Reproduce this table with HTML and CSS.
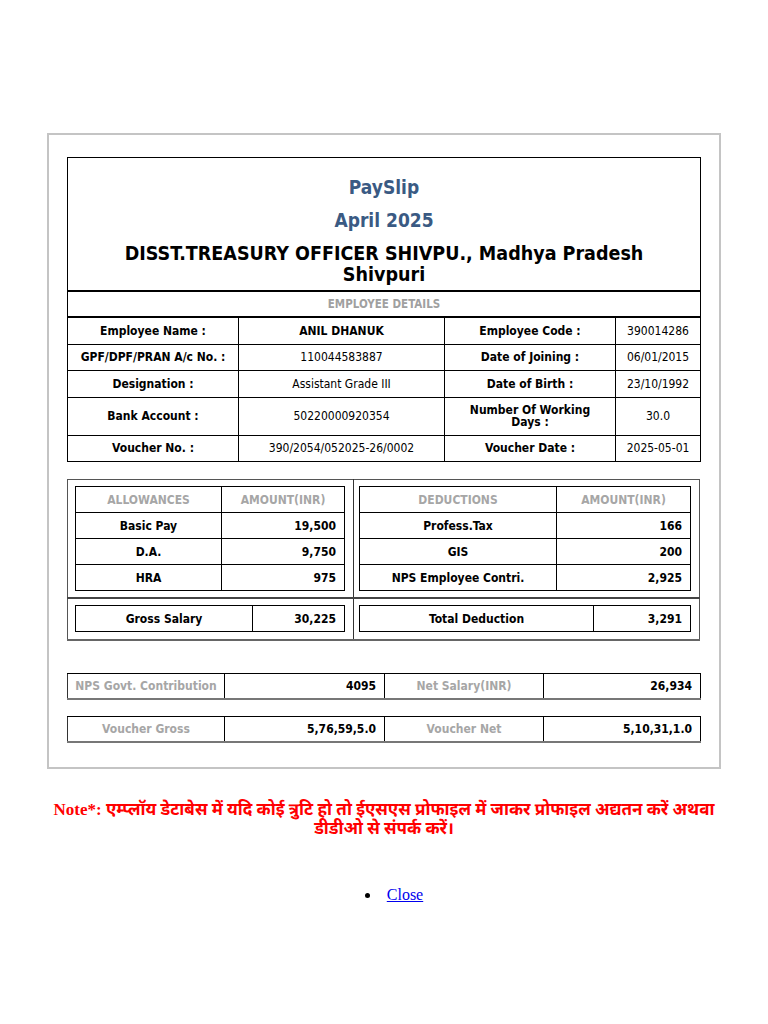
FILE: index.html
```html
<!DOCTYPE html>
<html>
<head>
<meta charset="utf-8">
<link rel="stylesheet" href="styles.css">
</head>
<body>
<div class="panel">
  <table class="emp">
    <colgroup><col class="c1"><col class="c2"><col class="c3"><col class="c4"></colgroup>
    <tr><td colspan="4" class="head">
      <div class="t1">PaySlip</div>
      <div class="t2">April 2025</div>
      <div class="t3">DISST.TREASURY OFFICER SHIVPU., Madhya Pradesh<br>Shivpuri</div>
    </td></tr>
    <tr><td colspan="4" class="sec">EMPLOYEE DETAILS</td></tr>
    <tr class="r"><td class="lb">Employee Name :</td><td class="lb">ANIL DHANUK</td><td class="lb">Employee Code :</td><td>390014286</td></tr>
    <tr class="r"><td class="lb">GPF/DPF/PRAN A/c No. :</td><td>110044583887</td><td class="lb">Date of Joining :</td><td>06/01/2015</td></tr>
    <tr class="r"><td class="lb">Designation :</td><td>Assistant Grade III</td><td class="lb">Date of Birth :</td><td>23/10/1992</td></tr>
    <tr class="r tall"><td class="lb">Bank Account :</td><td>50220000920354</td><td class="lb">Number Of Working<br>Days :</td><td>30.0</td></tr>
    <tr class="r"><td class="lb">Voucher No. :</td><td>390/2054/052025-26/0002</td><td class="lb">Voucher Date :</td><td>2025-05-01</td></tr>
  </table>

  <table class="box">
    <tr>
      <td class="bl">
        <table class="inner">
          <colgroup><col class="a1"><col></colgroup>
          <tr class="hd"><td>ALLOWANCES</td><td>AMOUNT(INR)</td></tr>
          <tr><td class="lb">Basic Pay</td><td class="amt">19,500</td></tr>
          <tr><td class="lb">D.A.</td><td class="amt">9,750</td></tr>
          <tr><td class="lb">HRA</td><td class="amt">975</td></tr>
        </table>
      </td>
      <td class="br">
        <table class="inner">
          <colgroup><col class="d1"><col></colgroup>
          <tr class="hd"><td>DEDUCTIONS</td><td>AMOUNT(INR)</td></tr>
          <tr><td class="lb">Profess.Tax</td><td class="amt">166</td></tr>
          <tr><td class="lb">GIS</td><td class="amt">200</td></tr>
          <tr><td class="lb">NPS Employee Contri.</td><td class="amt">2,925</td></tr>
        </table>
      </td>
    </tr>
    <tr>
      <td class="bl bot">
        <table class="inner">
          <colgroup><col class="g1"><col></colgroup>
          <tr><td class="lb">Gross Salary</td><td class="amt">30,225</td></tr>
        </table>
      </td>
      <td class="br bot">
        <table class="inner">
          <colgroup><col class="g2"><col></colgroup>
          <tr><td class="lb">Total Deduction</td><td class="amt">3,291</td></tr>
        </table>
      </td>
    </tr>
  </table>

  <table class="sum first">
    <colgroup><col class="s1"><col class="s2"><col class="s3"><col class="s4"></colgroup>
    <tr><td class="gl">NPS Govt. Contribution</td><td class="amt">4095</td><td class="gl">Net Salary(INR)</td><td class="amt">26,934</td></tr>
  </table>
  <table class="sum">
    <colgroup><col class="s1"><col class="s2"><col class="s3"><col class="s4"></colgroup>
    <tr><td class="gl">Voucher Gross</td><td class="amt">5,76,59,5.0</td><td class="gl">Voucher Net</td><td class="amt">5,10,31,1.0</td></tr>
  </table>
</div>

<p class="note">Note*: एम्प्लॉय डेटाबेस में यदि कोई त्रुटि हो तो ईएसएस प्रोफाइल में जाकर प्रोफाइल अद्यतन करें अथवा डीडीओ से संपर्क करें।</p>

<ul class="links"><li><a href="#">Close</a></li></ul>
</body>
</html>
```

FILE: styles.css
```css
html, body { margin: 0; padding: 0; background: #fff; }
body { font-family: "DejaVu Sans", Verdana, sans-serif; font-stretch: condensed; color: #000; }

.panel {
  width: 633px;
  margin: 133px auto 0;
  border: 2px solid #c4c4c4;
  padding: 22px 19px 24px 18px;
}

table { border-collapse: collapse; }

.emp { width: 633px; table-layout: fixed; }
.emp .c1 { width: 171px; }
.emp .c2 { width: 206px; }
.emp .c3 { width: 171px; }
.emp .c4 { width: 85px; }
.emp td { border: 1px solid #000; text-align: center; font-size: 12px; padding: 0 2px; }
.emp .head { border-bottom: 2px solid #000; padding: 18px 4px 5px; }
.t1, .t2 { color: #3a5a83; font-weight: bold; font-size: 19px; line-height: 22px; }
.t2 { margin-top: 11px; }
.t3 { font-weight: bold; font-size: 19.5px; line-height: 21px; margin-top: 12px; }
.emp .sec { height: 24px; color: #a0a0a0; font-size: 11.5px; font-weight: bold; border-bottom: 2px solid #000; }
.emp .r td { height: 25.5px; }
.emp .r.tall td { height: 37px; line-height: 12px; }
.lb { font-weight: bold; }

.box {
  width: 633px;
  margin-top: 17px;
  border: 1px solid #555;
  border-bottom: 2px solid #666;
}
.box > tbody > tr > td { vertical-align: top; padding: 6px 8px 6px 7px; }
.box .bl { width: 270px; border-right: 1px solid #333; }
.box .br { border-left: 1px solid #333; padding-left: 5px; }
.box .bot { border-top: 2px solid #444; padding-top: 6px; padding-bottom: 7px; }
.inner { width: 100%; table-layout: fixed; }
.inner .a1 { width: 146px; }
.inner .d1 { width: 197px; }
.inner .g1 { width: 177px; }
.inner .g2 { width: 234px; }
.inner td { border: 1px solid #000; height: 25px; font-size: 12px; text-align: center; padding: 0 8px; }
.inner .hd td { color: #a6a6a6; font-weight: bold; font-size: 12px; }
.amt { text-align: right !important; font-weight: bold; }

.sum {
  width: 633px;
  table-layout: fixed;
  margin-top: 16px;
  border-top: 1px solid #000;
  border-left: 1px solid #333;
  border-bottom: 2px solid #777;
  border-right: 1px solid #333;
}
.sum.first { margin-top: 32px; }
.sum .s1 { width: 157px; }
.sum .s2 { width: 160px; }
.sum .s3 { width: 159px; }
.sum .s4 { width: 157px; }
.sum td { height: 24px; font-size: 12px; border-right: 1px solid #000; padding: 0 8px; white-space: nowrap; }
.sum .gl { color: #a6a6a6; font-weight: bold; text-align: center; padding: 0 2px; }

.note {
  font-family: "Liberation Serif", "Noto Sans Devanagari", "Noto Sans", serif;
  font-stretch: normal;
  color: #ff0000;
  font-weight: bold;
  font-size: 17px;
  line-height: 19px;
  text-align: center;
  margin: 31px 40px 0;
}

.links {
  font-family: "Liberation Serif", serif;
  font-stretch: normal;
  font-size: 16px;
  text-align: center;
  margin: 48px 0 0;
  padding: 0 0 0 20px;
  list-style-position: inside;
}
.links a { color: #0000ee; }
```
